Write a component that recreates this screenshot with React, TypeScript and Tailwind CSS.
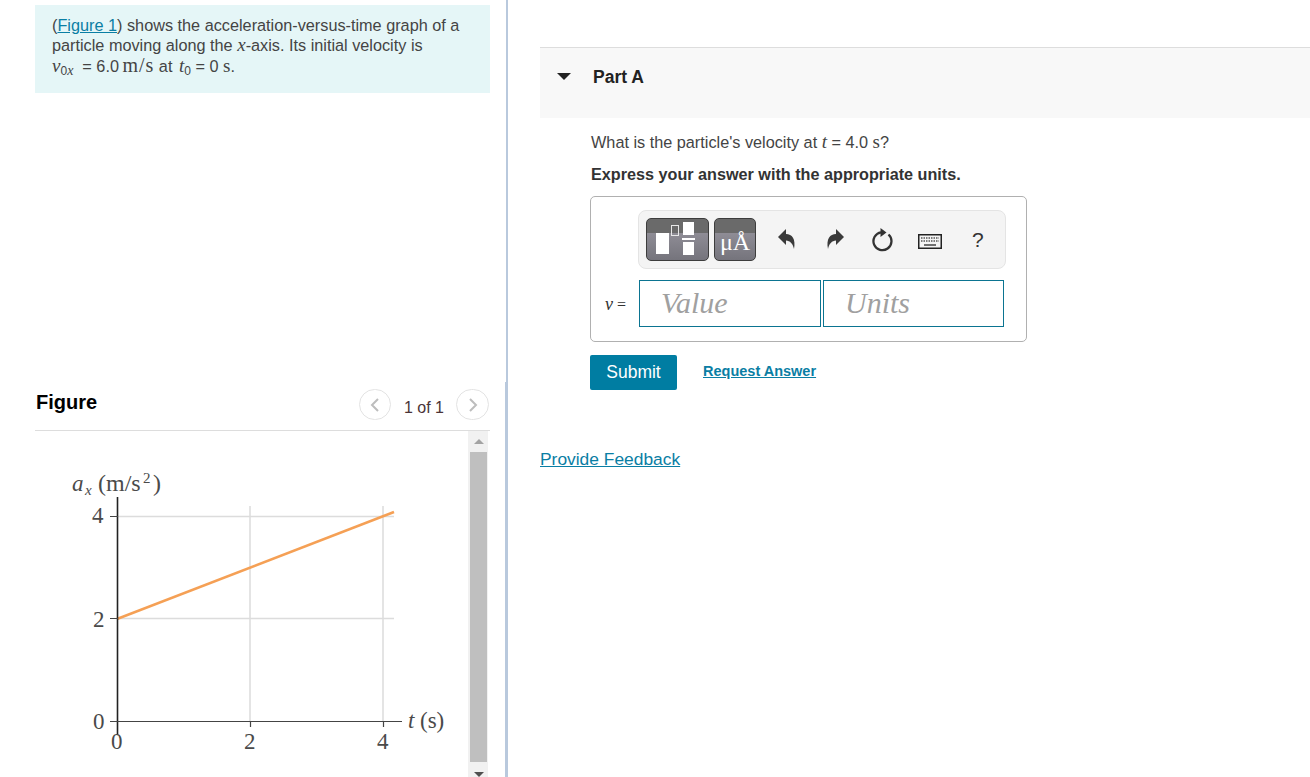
const sans = "font-['Liberation_Sans',Arial,sans-serif]";
const serif = "font-['Liberation_Serif','Times_New_Roman',serif]";

const Figure = () => (
  <svg width="433" height="346" viewBox="35 431 433 346" className="block shrink-0">
    <g stroke="#dcdcdc" strokeWidth="1.5" fill="none">
      <path d="M117 516.5H394M117 618.5H394M250 506V721M383 506V721" />
    </g>
    <path d="M117 619L394 512" stroke="#f5a055" strokeWidth="2.5" fill="none" />
    <path d="M117.5 497V735" stroke="#222" strokeWidth="1.6" fill="none" />
    <path d="M110 516.5H118M110 618.5H118M110 721.5H402M250.5 721V727M383.5 721V727" stroke="#444" strokeWidth="1.2" fill="none" />
    <g fill="#4a4a4a" fontFamily="'Liberation Serif', serif" fontSize="23">
      <text x="72" y="491" fontStyle="italic">a</text>
      <text x="85" y="495" fontStyle="italic" fontSize="15">x</text>
      <text x="98" y="491" fontSize="24">(m/s</text>
      <text x="143" y="483" fontSize="15">2</text>
      <text x="153" y="491" fontSize="24">)</text>
      <text x="92" y="523">4</text>
      <text x="93" y="627">2</text>
      <text x="93" y="729">0</text>
      <text x="111" y="749">0</text>
      <text x="244" y="749">2</text>
      <text x="377" y="749">4</text>
      <text x="408" y="728" fontStyle="italic">t</text>
      <text x="420" y="728">(s)</text>
    </g>
  </svg>
);

const FormatIcons = () => (
  <div className="flex gap-[5px]">
    <div className="relative h-[43px] w-[63px] overflow-hidden rounded-[5px] border border-[#3d3d3d] bg-[linear-gradient(#6a6a6a_0,#6a6a6a_33%,#8f8d96_33%,#75747c_100%)]">
      <div className="absolute left-[9px] top-[14px] h-[21px] w-[13px] bg-white" />
      <div className="absolute left-[24px] top-[6px] h-[11px] w-[8px] border border-[#e8e8e8]" />
      <div className="absolute left-[36px] top-[3px] h-[13px] w-[11px] bg-white" />
      <div className="absolute left-[35px] top-[19px] h-[2px] w-[13px] bg-white" />
      <div className="absolute left-[36px] top-[23px] h-[13px] w-[11px] bg-white" />
    </div>
    <div className={`relative h-[43px] w-[42px] overflow-hidden rounded-[5px] border border-[#3d3d3d] bg-[linear-gradient(#6a6a6a_0,#6a6a6a_33%,#8f8d96_33%,#75747c_100%)] pt-[1px] text-center text-[24px] leading-[44px] text-white ${serif}`}>
      μÅ
    </div>
  </div>
);

const ToolIcons = () => (
  <>
    <svg width="18" height="21" viewBox="0 0 18 21" className="ml-[22px]">
      <path d="M0 8L8 0V5C14 5 18 10 16 20C15 15 12 11.500 8 11.500V16Z" fill="#3a3a3a" />
    </svg>
    <svg width="18" height="21" viewBox="0 0 18 21" className="ml-[30px]">
      <path d="M18 8L10 0V5C4 5 0 10 2 20C3 15 6 11.500 10 11.500V16Z" fill="#3a3a3a" />
    </svg>
    <svg width="22" height="24" viewBox="0 0 22 24" className="ml-[28px]">
      <path d="M9 4.300A9 9 0 1 0 16.500 6.500" fill="none" stroke="#333" strokeWidth="2.3" />
      <path d="M8.500 0L14.500 4.500L8.500 9Z" fill="#333" />
    </svg>
    <svg width="24" height="15" viewBox="0 0 24 15" className="ml-[24px] mt-[3px]">
      <rect x="0.750" y="0.750" width="22.500" height="13.500" fill="#f4f4f4" stroke="#222" strokeWidth="1.500" />
      <path d="M3 4H21M3 7H21" stroke="#555" strokeWidth="1.500" strokeDasharray="1.500 1" />
      <path d="M6 11H18" stroke="#444" strokeWidth="1.500" />
    </svg>
    <span className={`ml-[30px] text-[21px] leading-none text-[#333] ${sans}`}>?</span>
  </>
);

const Pager = () => (
  <div className="mr-[1px] flex items-start">
    <div className="flex h-[31px] w-[32px] items-center justify-center rounded-full border border-[#e3e3e3]">
      <svg width="10" height="14" viewBox="0 0 10 14"><path d="M8 1L2 7L8 13" fill="none" stroke="#bdbdbd" strokeWidth="2" /></svg>
    </div>
    <span className="ml-[13px] mr-[12px] mt-[7px] text-[16px] leading-[24px] text-[#4a3438]">1 of 1</span>
    <div className="flex h-[31px] w-[33px] items-center justify-center rounded-full border border-[#e3e3e3]">
      <svg width="10" height="14" viewBox="0 0 10 14"><path d="M2 1L8 7L2 13" fill="none" stroke="#bdbdbd" strokeWidth="2" /></svg>
    </div>
  </div>
);

export default function App() {
  return (
    <div className={`flex h-[777px] w-[1310px] overflow-hidden bg-white ${sans}`}>
      <div className="flex w-[505px] shrink-0 flex-col pl-[35px]">
        <div className="mt-[5px] h-[88px] w-[455px] bg-[#e5f6f7] pl-[17px] pr-[20px] pt-[10px] text-[16.250px] leading-[20px] text-[#444]">
          <p>
            (<span className="text-[#0a7ea4] underline">Figure 1</span>) shows the acceleration-versus-time graph of a particle moving along the{" "}
            <i className={`${serif} text-[19px] leading-none`}>x</i>-axis. Its initial velocity is
            <br />
            <span className="mr-[9px] leading-none">
              <i className={`${serif} text-[19px]`}>v</i>
              <span className="align-[-3px] text-[12px]">0</span>
              <i className={`${serif} align-[-3px] text-[14px]`}>x</i>
            </span>
            = 6.0 <span className={`${serif} ml-[-1px] text-[20px] leading-none tracking-[1px]`}>m/s</span> at <i className={`${serif} ml-[2px] text-[19px] leading-none`}>t</i>
            <span className="align-[-3px] text-[12px] leading-none">0</span> = 0 <span className={`${serif} text-[19px] leading-none`}>s</span>.
          </p>
        </div>
        <div className="mt-[295px] flex h-[43px] w-[455px] items-start justify-between border-b border-[#dddddd]">
          <h2 className="ml-[1px] mt-[1px] text-[20px] font-bold leading-[27px] text-black">Figure</h2>
          <div className="mt-[1px]"><Pager /></div>
        </div>
        <div className="flex min-h-0 flex-1">
          <Figure />
          <div className="flex h-full w-[20px] flex-col bg-[#f1f1f1] pl-[2px]">
            <div className="flex h-[21px] w-[17px] items-center justify-center">
              <div className="h-0 w-0 border-x-[5px] border-b-[5px] border-x-transparent border-b-[#a3a3a3]" />
            </div>
            <div className="h-[313px] w-[17px] bg-[#bfbfbf]" />
            <div className="flex w-[17px] flex-1 justify-center pt-[10px]">
              <div className="h-0 w-0 border-x-[5px] border-t-[5px] border-x-transparent border-t-[#505050]" />
            </div>
          </div>
        </div>
      </div>

      <div className="flex w-[3px] shrink-0 flex-col">
        <div className="ml-[1px] h-[382px] w-[2px] bg-[#b9c9dd]" />
        <div className="flex-1 bg-[#b9c9dd]" />
      </div>

      <div className="min-w-0 flex-1 pl-[32px]">
        <div className="mt-[47px] flex h-[71px] items-start border-t border-[#dddddd] bg-[#f8f8f8]">
          <div className="ml-[17px] mt-[25px] h-0 w-0 border-x-[7px] border-t-[7px] border-x-transparent border-t-[#222]" />
          <h3 className="ml-[22px] mt-[19px] text-[17.500px] font-bold leading-[20px] text-[#222]">Part A</h3>
        </div>
        <div className="pl-[50px]">
          <p className="ml-[1px] mt-[14px] text-[16.250px] leading-[20px] text-[#444]">
            What is the particle's velocity at <i className={`${serif} text-[19px] leading-none`}>t</i> = 4.0 <span className={`${serif} text-[19px] leading-none`}>s</span>?
          </p>
          <p className="ml-[1px] mt-[12px] text-[16.200px] font-bold leading-[20px] text-[#333]">Express your answer with the appropriate units.</p>
          <div className="mt-[12px] h-[146px] w-[437px] rounded-[5px] border border-[#b0b0b0] pl-[47px] pt-[13px]">
            <div className="flex h-[59px] w-[368px] items-center rounded-[8px] border border-[#e4e4e4] bg-[#f4f4f4] pl-[7px]">
              <FormatIcons />
              <ToolIcons />
            </div>
            <div className="ml-[1px] mt-[11px] flex">
              <span className={`ml-[-34px] mt-[14px] w-[34px] text-[16px] leading-[20px] text-[#333] ${serif}`}><i className="text-[18px]">v</i> =</span>
              <div className={`h-[47px] w-[182px] border border-[#0b7491] pl-[21px] text-[30px] italic leading-[44px] text-[#a0a0a0] ${serif}`}>Value</div>
              <div className={`ml-[2px] h-[47px] w-[181px] border border-[#0b7491] pl-[21px] text-[30px] italic leading-[44px] text-[#a0a0a0] ${serif}`}>Units</div>
            </div>
          </div>
          <div className="mt-[13px] flex items-center">
            <button className="h-[35px] w-[87px] rounded-[2px] bg-[#007da2] text-[17.500px] text-white">Submit</button>
            <a className="ml-[26px] mb-[1px] text-[14.500px] font-bold text-[#0a7ea4] underline">Request Answer</a>
          </div>
        </div>
        <a className="mt-[58px] block w-fit text-[17.400px] leading-[22px] text-[#0a7ea4] underline">Provide Feedback</a>
      </div>
    </div>
  );
}
